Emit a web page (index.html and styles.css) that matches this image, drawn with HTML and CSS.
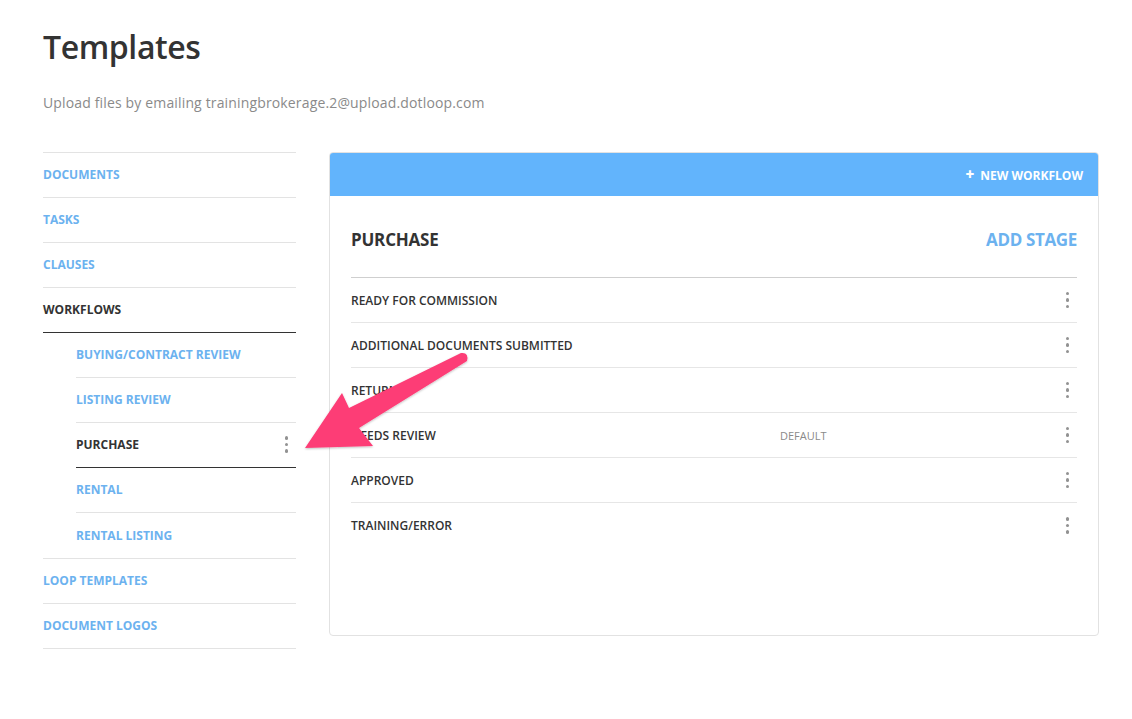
FILE: index.html
```html
<!DOCTYPE html>
<html lang="en">
<head>
  <meta charset="UTF-8">
  <title>Templates</title>
  <link rel="stylesheet" href="styles.css">
</head>
<body>
  <div class="page">
    <h1>Templates</h1>
    <p class="upload-note">Upload files by emailing trainingbrokerage.2@upload.dotloop.com</p>

    <div class="layout">
      <!-- Sidebar -->
      <nav class="side-nav">
        <a class="nav-item" href="#">DOCUMENTS</a>
        <a class="nav-item" href="#">TASKS</a>
        <a class="nav-item" href="#">CLAUSES</a>
        <a class="nav-item current" href="#">WORKFLOWS</a>
        <div class="sub-nav">
          <a class="nav-item" href="#">BUYING/CONTRACT REVIEW</a>
          <a class="nav-item" href="#">LISTING REVIEW</a>
          <a class="nav-item current" href="#">PURCHASE <span class="kebab"><i></i><i></i><i></i></span></a>
          <a class="nav-item" href="#">RENTAL</a>
          <a class="nav-item" href="#">RENTAL LISTING</a>
        </div>
        <a class="nav-item" href="#">LOOP TEMPLATES</a>
        <a class="nav-item" href="#">DOCUMENT LOGOS</a>
      </nav>

      <!-- Workflow card -->
      <section class="card">
        <div class="card-bar">
          <a class="new-workflow" href="#"><span class="plus">+</span>NEW WORKFLOW</a>
        </div>
        <div class="card-body">
          <div class="card-head">
            <h2>PURCHASE</h2>
            <a class="add-stage" href="#">ADD STAGE</a>
          </div>
          <ul class="stages">
            <li><span class="stage-name">READY FOR COMMISSION</span><span class="kebab"><i></i><i></i><i></i></span></li>
            <li><span class="stage-name">ADDITIONAL DOCUMENTS SUBMITTED</span><span class="kebab"><i></i><i></i><i></i></span></li>
            <li><span class="stage-name">RETURNED</span><span class="kebab"><i></i><i></i><i></i></span></li>
            <li><span class="stage-name">NEEDS REVIEW</span><span class="stage-tag">DEFAULT</span><span class="kebab"><i></i><i></i><i></i></span></li>
            <li><span class="stage-name">APPROVED</span><span class="kebab"><i></i><i></i><i></i></span></li>
            <li><span class="stage-name">TRAINING/ERROR</span><span class="kebab"><i></i><i></i><i></i></span></li>
          </ul>
        </div>
      </section>
    </div>
  </div>

  <!-- annotation arrow -->
  <svg class="callout" width="1132" height="719" viewBox="0 0 1132 719">
    <defs>
      <filter id="shadow" x="-10%" y="-10%" width="120%" height="130%">
        <feDropShadow dx="0" dy="1" stdDeviation="1.2" flood-color="#000" flood-opacity="0.25"/>
      </filter>
    </defs>
    <path d="M305 448 L342 393 L349 408 L461 353 Q469 352 467 361 L359 428 L373 446 Z" fill="#fd3d76" filter="url(#shadow)"/>
  </svg>
</body>
</html>
```

FILE: styles.css
```css
* { box-sizing: border-box; }

body {
  margin: 0;
  background: #fff;
  font-family: "Open Sans", "Liberation Sans", sans-serif;
  color: #333;
}

a { text-decoration: none; }

.page {
  padding: 24px 33px 0 43px;
}

h1 {
  margin: 0;
  font-size: 32px;
  font-weight: 600;
  letter-spacing: -0.4px;
  line-height: 46px;
  color: #333;
}

.upload-note {
  margin: 23px 0 0;
  font-size: 14px;
  line-height: 20px;
  letter-spacing: 0.15px;
  color: #8a8a8a;
}

.layout {
  display: flex;
  align-items: flex-start;
  gap: 33px;
  margin-top: 39px;
}

/* Sidebar */
.side-nav {
  width: 253px;
  flex: none;
  border-top: 1px solid #e3e3e3;
}

.nav-item {
  display: flex;
  align-items: center;
  justify-content: space-between;
  height: 45px;
  padding-bottom: 1px;
  border-bottom: 1px solid #e3e3e3;
  font-size: 12px;
  font-weight: 700;
  color: #6cb2ef;
}

.nav-item.current {
  color: #333;
  border-bottom-color: #333;
}

.sub-nav {
  padding-left: 33px;
  border-bottom: 1px solid #e3e3e3;
}

.sub-nav .nav-item:last-child {
  border-bottom: none;
}

.kebab {
  display: flex;
  flex-direction: column;
  gap: 3px;
  padding-right: 8px;
}

.kebab i {
  display: block;
  width: 3.5px;
  height: 3.5px;
  border-radius: 50%;
  background: #929292;
}

/* Card */
.card {
  flex: 1;
  height: 484px;
  border: 1px solid #e2e2e2;
  border-radius: 4px;
  overflow: hidden;
}

.card-bar {
  display: flex;
  justify-content: flex-end;
  align-items: center;
  height: 44px;
  margin: -1px -1px 0;
  padding: 0 16px;
  background: #62b4fc;
  border-radius: 4px 4px 0 0;
}

.new-workflow {
  color: #fff;
  font-size: 12px;
  font-weight: 700;
}

.new-workflow .plus {
  margin-right: 6px;
  font-size: 15px;
  font-weight: 800;
}

.card-body {
  padding: 0 21px 0 21px;
}

.card-head {
  display: flex;
  justify-content: space-between;
  align-items: center;
  height: 82px;
  padding-top: 5px;
  border-bottom: 1px solid #cfcfcf;
}

.card-head h2 {
  margin: 0;
  font-size: 17px;
  font-weight: 700;
  letter-spacing: -0.2px;
  color: #333;
}

.add-stage {
  font-size: 17px;
  font-weight: 700;
  letter-spacing: -0.35px;
  color: #6cb2ef;
}

.stages {
  list-style: none;
  margin: 0;
  padding: 0;
}

.stages li {
  display: flex;
  align-items: center;
  height: 45px;
  border-bottom: 1px solid #e6e6e6;
  font-size: 12px;
  font-weight: 600;
  color: #333;
}

.stages li:last-child {
  border-bottom: none;
}

.stage-name {
  width: 429px;
}

.stage-tag {
  font-size: 11px;
  font-weight: 400;
  color: #8a8a8a;
}

.stages .kebab {
  margin-left: auto;
}

/* Overlay arrow */
.callout {
  position: absolute;
  left: 0;
  top: 0;
  pointer-events: none;
}
```
